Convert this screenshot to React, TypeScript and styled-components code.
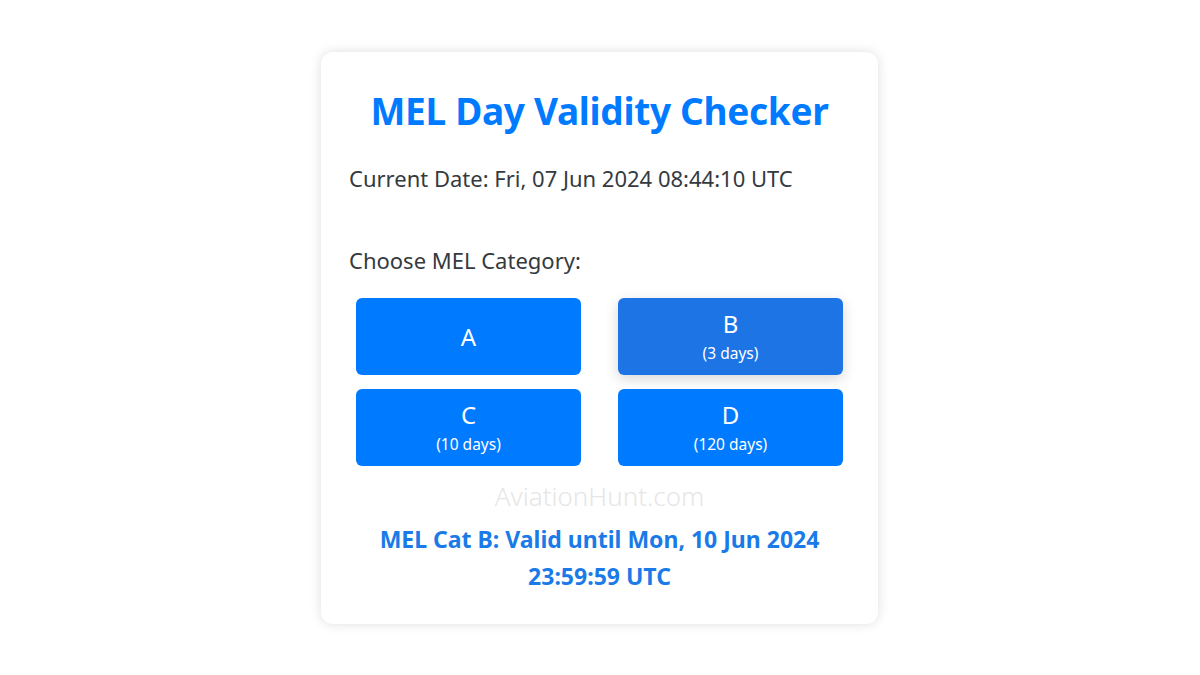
import { useState } from 'react';
import styled, { createGlobalStyle } from 'styled-components';

const GlobalStyle = createGlobalStyle`
  html, body {
    margin: 0;
    padding: 0;
    background: #ffffff;
  }
  body {
    font-family: 'Noto Sans', 'Open Sans', sans-serif;
  }
`;

const Page = styled.div`
  display: flex;
  justify-content: center;
  align-items: center;
  min-height: 100vh;
`;

const Card = styled.div`
  box-sizing: border-box;
  width: 557px;
  margin-right: 1px;
  padding: 19px 28px 29px;
  background: #ffffff;
  border-radius: 12px;
  box-shadow: 0 0 12px rgba(0, 0, 0, 0.13);
`;

const Title = styled.h1`
  margin: 18px 0 0;
  font-size: 37px;
  line-height: 43px;
  font-weight: 700;
  color: #007bff;
  text-align: center;
  letter-spacing: -0.3px;
`;

const Label = styled.p<{ $gap: number }>`
  margin: ${(p) => p.$gap}px 0 0;
  font-size: 22px;
  line-height: 30px;
  color: #343a40;
`;

const ButtonGrid = styled.div`
  display: grid;
  grid-template-columns: 1fr 1fr;
  gap: 14px 37px;
  padding: 0 7px;
  margin-top: 23px;
`;

const CategoryButton = styled.button<{ $active: boolean }>`
  height: 77px;
  border: none;
  border-radius: 6px;
  background: ${(p) => (p.$active ? '#1c74e5' : '#007bff')};
  box-shadow: ${(p) => (p.$active ? '0 4px 14px rgba(0, 0, 0, 0.16)' : 'none')};
  color: #ffffff;
  font-family: inherit;
  cursor: pointer;
  display: flex;
  flex-direction: column;
  align-items: center;
  justify-content: center;
`;

const Letter = styled.span`
  font-size: 24px;
  line-height: 29px;
`;

const Days = styled.span`
  margin-top: 4px;
  font-size: 15.5px;
  line-height: 22px;
`;

const Watermark = styled.div`
  margin-top: 16px;
  text-align: center;
  font-size: 26px;
  line-height: 29px;
  font-weight: 300;
  color: #e6e6e6;
`;

const Result = styled.p`
  margin: 10px 0 0;
  text-align: center;
  font-size: 23px;
  line-height: 37px;
  font-weight: 700;
  color: #1a7be8;
  padding: 0 20px;
`;

const categories = [
  { id: 'A', days: null },
  { id: 'B', days: 3 },
  { id: 'C', days: 10 },
  { id: 'D', days: 120 },
];

export default function App() {
  const [selected, setSelected] = useState('B');

  return (
    <>
      <GlobalStyle />
      <Page>
        <Card>
          <Title>MEL Day Validity Checker</Title>
          <Label $gap={31}>Current Date: Fri, 07 Jun 2024 08:44:10 UTC</Label>
          <Label $gap={52}>Choose MEL Category:</Label>
          <ButtonGrid>
            {categories.map((c) => (
              <CategoryButton
                key={c.id}
                $active={selected === c.id}
                onClick={() => setSelected(c.id)}
              >
                <Letter>{c.id}</Letter>
                {c.days !== null && <Days>({c.days} days)</Days>}
              </CategoryButton>
            ))}
          </ButtonGrid>
          <Watermark>AviationHunt.com</Watermark>
          <Result>MEL Cat B: Valid until Mon, 10 Jun 2024 23:59:59 UTC</Result>
        </Card>
      </Page>
    </>
  );
}
